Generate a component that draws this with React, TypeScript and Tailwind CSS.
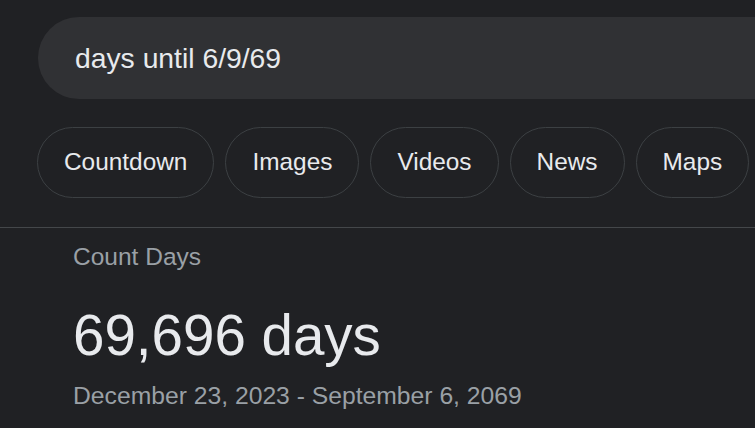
import React from 'react';

const chips: string[] = ['Countdown', 'Images', 'Videos', 'News', 'Maps'];

const App: React.FC = () => {
  return (
    <div
      className="w-full h-[428px] overflow-hidden bg-[#202124] text-[#e8eaed]"
      style={{ fontFamily: '"Liberation Sans", Arial, sans-serif' }}
    >
      {/* search box */}
      <div className="pt-[17px] pl-[38px]">
        <div className="flex items-center h-[82px] w-[760px] rounded-full bg-[#303134] pl-[37px]">
          <span className="text-[28.3px] leading-none text-[#e8eaed]">days until 6/9/69</span>
        </div>
      </div>

      {/* chips */}
      <div className="flex gap-[11px] mt-[28px] pl-[37px]">
        {chips.map((chip) => (
          <div
            key={chip}
            className="flex items-center shrink-0 h-[71px] px-[26px] rounded-full border border-[#3c4043] whitespace-nowrap text-[24.4px] text-[#e8eaed]"
          >
            {chip}
          </div>
        ))}
      </div>

      <div className="mt-[29px] h-px bg-[#44474a]"></div>

      {/* result */}
      <div className="pl-[73px]">
        <div className="mt-[14px] text-[24.5px] leading-[30px] text-[#9aa0a6]">Count Days</div>
        <div className="mt-[32px] text-[56.5px] leading-[64px] text-[#e8eaed]">69,696 days</div>
        <div className="mt-[13px] text-[24.7px] leading-[30px] text-[#9aa0a6]">
          December 23, 2023 - September 6, 2069
        </div>
      </div>
    </div>
  );
};

export default App;
